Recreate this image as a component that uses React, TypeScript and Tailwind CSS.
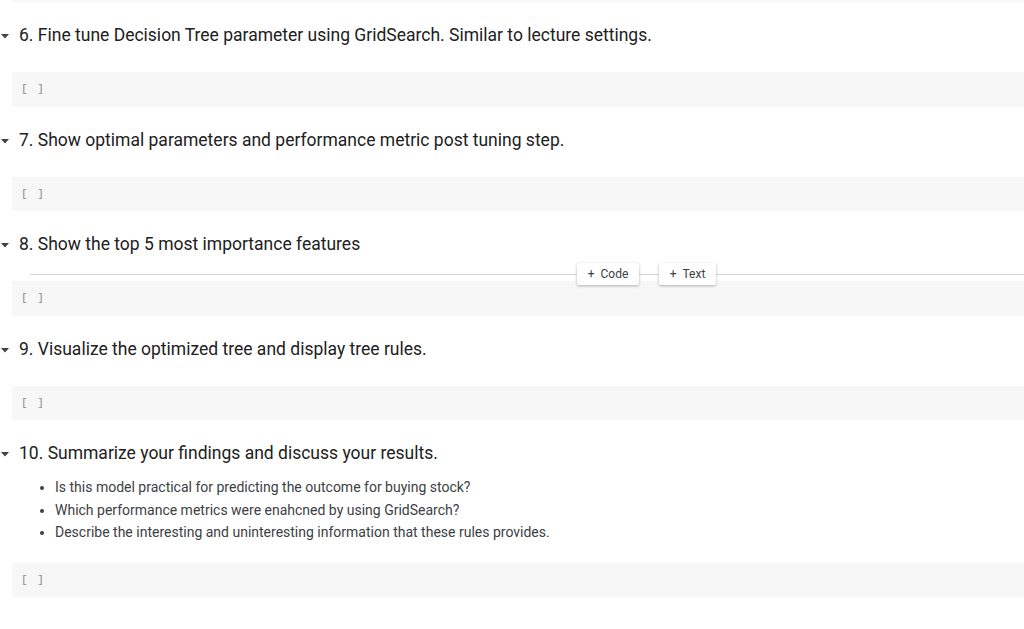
import React from 'react';

type Section = {
  title: string;
  bullets?: string[];
  toolbar?: boolean;
};

const sections: Section[] = [
  { title: '6. Fine tune Decision Tree parameter using GridSearch. Similar to lecture settings.' },
  { title: '7. Show optimal parameters and performance metric post tuning step.' },
  { title: '8. Show the top 5 most importance features', toolbar: true },
  { title: '9. Visualize the optimized tree and display tree rules.' },
  {
    title: '10. Summarize your findings and discuss your results.',
    bullets: [
      'Is this model practical for predicting the outcome for buying stock?',
      'Which performance metrics were enahcned by using GridSearch?',
      'Describe the interesting and uninteresting information that these rules provides.',
    ],
  },
];

const Caret = () => (
  <svg width="10" height="10" viewBox="0 0 10 10" className="absolute left-[0px] top-[29px]">
    <path d="M1 3 L9 3 L5 7.5 Z" fill="#424242" />
  </svg>
);

const CodeCell = () => (
  <div className="ml-[12px] h-[34.5px] bg-[#f7f7f7] flex items-center pl-[9px]">
    <span className="font-['Liberation_Mono',monospace] text-[11px] text-[#8a8a8a] tracking-[1.5px]">[ ]</span>
  </div>
);

const Toolbar = () => (
  <div className="absolute left-[30px] right-0 top-[-18px] h-[22px] flex items-center">
    <div className="absolute inset-x-0 top-[11px] h-px bg-[#d7d7d7]" />
    <div className="relative ml-[547px] flex gap-[20px]">
      <button className="h-[22px] w-[62px] bg-white rounded-[2px] shadow-[0_1px_3px_rgba(0,0,0,0.3)] text-[12px] text-[#3c4043] flex items-center justify-center gap-[6px]">
        <span>+</span>
        <span>Code</span>
      </button>
      <button className="h-[22px] w-[57px] bg-white rounded-[2px] shadow-[0_1px_3px_rgba(0,0,0,0.3)] text-[12px] text-[#3c4043] flex items-center justify-center gap-[6px]">
        <span>+</span>
        <span>Text</span>
      </button>
    </div>
  </div>
);

export default function App() {
  return (
    <div className="w-[1024px] h-[629px] bg-white overflow-hidden font-['Roboto',sans-serif]">
      <div className="ml-[12px] h-[2px] bg-[#f7f7f7]" />
      {sections.map((s) => (
        <div key={s.title} className="relative">
          <div className="relative">
            <Caret />
            <h2 className="pl-[19px] pt-[22px] text-[17.5px] leading-[22px] text-[#212121] font-normal">
              {s.title}
            </h2>
          </div>
          {s.bullets ? (
            <>
              <ul className="mt-[12px] pl-[55px] list-disc text-[14px] leading-[22.5px] text-[#3c4043]">
                {s.bullets.map((b) => (
                  <li key={b}>{b}</li>
                ))}
              </ul>
              <div className="h-[19px]" />
            </>
          ) : (
            <div className="h-[26px]" />
          )}
          <div className="relative">
            {s.toolbar && <Toolbar />}
            <CodeCell />
          </div>
        </div>
      ))}
    </div>
  );
}
